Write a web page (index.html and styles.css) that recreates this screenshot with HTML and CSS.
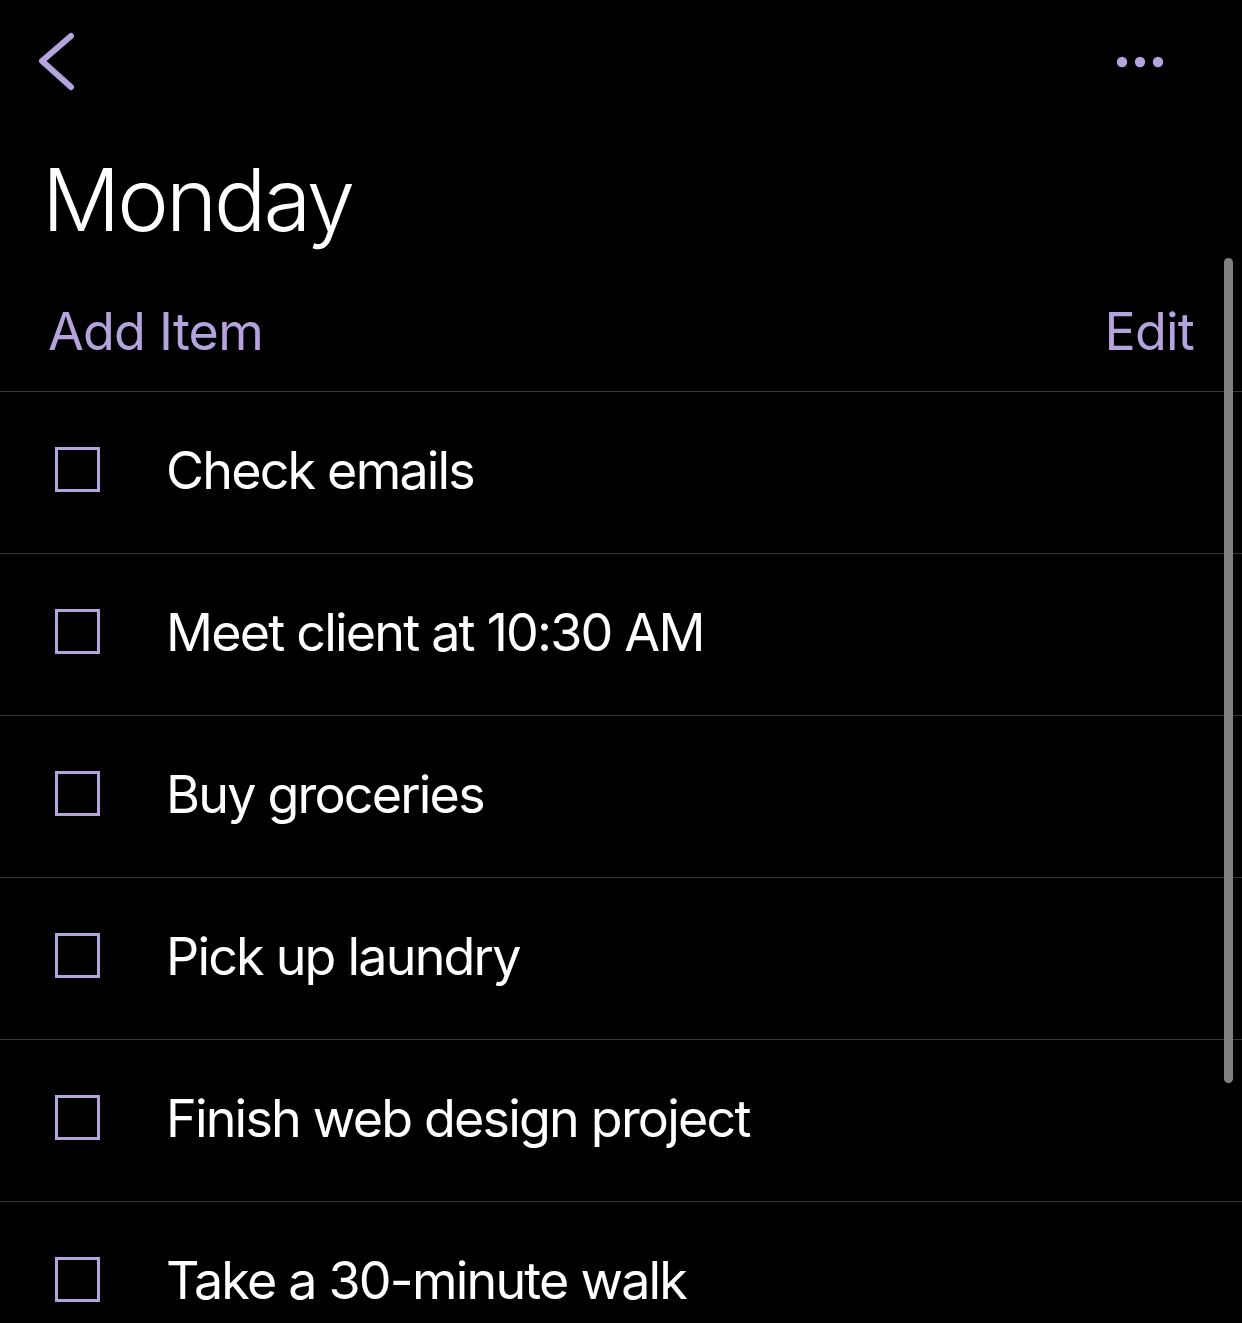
FILE: index.html
```html
<!DOCTYPE html>
<html lang="en">
<head>
<meta charset="utf-8">
<title>Monday</title>
<link rel="stylesheet" href="styles.css">
</head>
<body>
<div class="screen">
  <header class="nav">
    <svg class="back" width="40" height="60" viewBox="0 0 40 60" aria-label="Back">
      <polyline points="35,5 6,30 35,56" fill="none" stroke="#b4a3dd" stroke-width="6" stroke-linecap="round" stroke-linejoin="round"/>
    </svg>
    <svg class="more" width="54" height="14" viewBox="0 0 54 14" aria-label="More">
      <circle cx="9" cy="7" r="5.2" fill="#b4a3dd"/>
      <circle cx="27" cy="7" r="5.2" fill="#b4a3dd"/>
      <circle cx="45" cy="7" r="5.2" fill="#b4a3dd"/>
    </svg>
  </header>
  <h1 class="title">Monday</h1>
  <div class="toolbar">
    <span class="link">Add Item</span>
    <span class="link">Edit</span>
  </div>
  <ul class="list">
    <li class="row"><span class="check"></span><span class="label">Check emails</span></li>
    <li class="row"><span class="check"></span><span class="label">Meet client at 10:30 AM</span></li>
    <li class="row"><span class="check"></span><span class="label">Buy groceries</span></li>
    <li class="row"><span class="check"></span><span class="label">Pick up laundry</span></li>
    <li class="row"><span class="check"></span><span class="label">Finish web design project</span></li>
    <li class="row"><span class="check"></span><span class="label">Take a 30-minute walk</span></li>
  </ul>
  <div class="scrollbar"></div>
</div>
</body>
</html>
```
FILE: styles.css
```css
html, body {
  margin: 0;
  padding: 0;
  background: #000;
}
body {
  font-family: Inter, "Noto Sans", "Liberation Sans", sans-serif;
  color: #fff;
  overflow: hidden;
}
.screen {
  position: relative;
  width: 1242px;
  height: 1323px;
  overflow: hidden;
}
.nav {
  height: 124px;
  display: flex;
  align-items: center;
  justify-content: space-between;
  padding: 0 75px 0 36px;
}
.back {
  display: block;
  margin-top: -2px;
}
.more {
  display: block;
}
.title {
  margin: 26px 0 0 0;
  padding-left: 42px;
  font-size: 87px;
  line-height: 100px;
  font-weight: 300;
  letter-spacing: -3px;
  height: 100px;
}
.toolbar {
  display: flex;
  justify-content: space-between;
  padding: 52px 48px 29px 48px;
  border-bottom: 1px solid #38383a;
}
.link {
  color: #b4a3dd;
  font-size: 52px;
  line-height: 60px;
  font-weight: 400;
  letter-spacing: -0.8px;
}
.list {
  list-style: none;
  margin: 0;
  padding: 0;
}
.row {
  height: 161px;
  border-bottom: 1px solid #38383a;
  display: flex;
  align-items: center;
  padding-left: 55px;
  box-sizing: content-box;
}
.check {
  width: 39px;
  height: 39px;
  border: 3px solid #b4a3dd;
  margin-top: -6px;
  flex: none;
}
.label {
  margin-left: 66px;
  font-size: 52px;
  line-height: 60px;
  margin-top: -3px;
  letter-spacing: -1.8px;
}
.scrollbar {
  position: absolute;
  top: 258px;
  right: 9px;
  width: 9px;
  height: 825px;
  border-radius: 5px;
  background: #808080;
}
```
